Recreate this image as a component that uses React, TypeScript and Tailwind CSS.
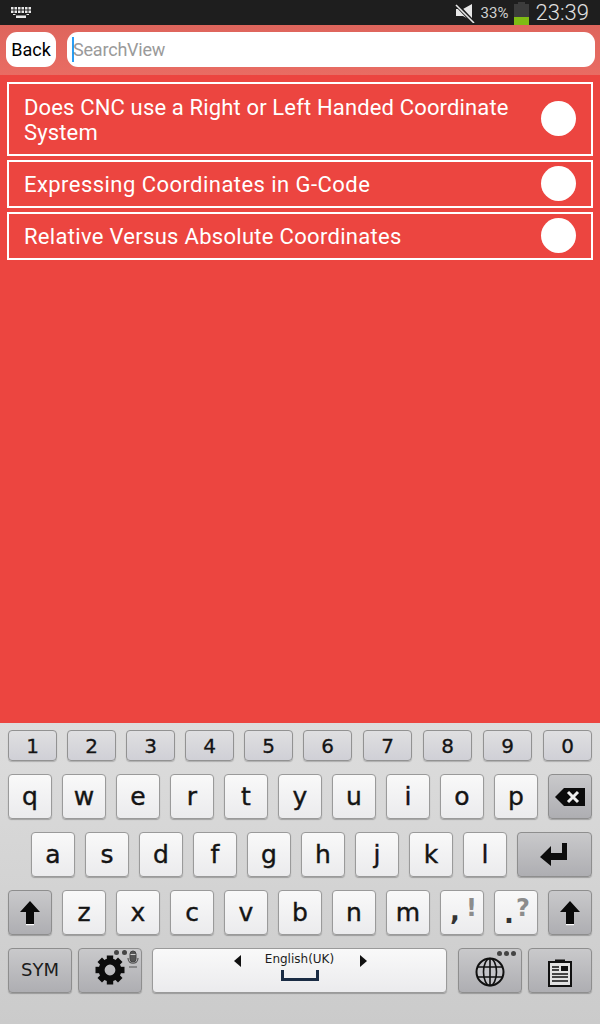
import React from "react";

const KF = "font-['DejaVu_Sans',sans-serif]";
const light = "bg-linear-to-b from-[#f9f9f9] to-[#ebebed] border border-[#9a9a9a] rounded-[4px] shadow-[0_1px_1px_rgba(0,0,0,0.25)]";
const dark = "bg-linear-to-b from-[#c9c9cb] to-[#aeaeb2] border border-[#8e8e8e] rounded-[4px] shadow-[0_1px_1px_rgba(0,0,0,0.25)]";
const num = "bg-linear-to-b from-[#dfdfe1] to-[#d0d0d6] border border-[#929292] rounded-[4px] shadow-[0_1px_1px_rgba(0,0,0,0.2)]";

function Key({ c }: { c: string }) {
  return (
    <div className={`w-[44px] h-[45px] flex items-center justify-center text-[25px] leading-none text-[#141414] [-webkit-text-stroke:0.4px_#141414] ${KF} ${light}`}>
      {c}
    </div>
  );
}
function Num({ c }: { c: string }) {
  return (
    <div className={`w-[49px] h-[31px] flex items-center justify-center text-[20px] leading-none text-[#141414] [-webkit-text-stroke:0.3px_#141414] ${KF} ${num}`}>
      {c}
    </div>
  );
}
function Shift() {
  return (
    <div className={`w-[44px] h-[45px] flex items-center justify-center ${dark}`}>
      <svg width="22" height="26" viewBox="0 0 22 26">
        <path d="M11 1 L21 12 L15 12 L15 24 L7 24 L7 12 L1 12 Z" fill="#0a0a0a" />
        <rect x="7" y="24" width="8" height="1.2" fill="#fff" />
      </svg>
    </div>
  );
}
function Row({ q, text, t }: { q: string; text: React.ReactNode; t: string }) {
  return (
    <div className={`border-2 border-white flex items-center pl-[15px] pr-[15px] ${q}`}>
      <div className={`flex-1 text-white text-[22px] leading-[25px] mt-[1px] ${t}`}>{text}</div>
      <div className="w-[35px] h-[35px] rounded-full bg-white shrink-0 mb-[1px]" />
    </div>
  );
}

function Gear() {
  const teeth = [0, 45, 90, 135, 180, 225, 270, 315];
  return (
    <svg width="32" height="32" viewBox="0 0 32 32">
      {teeth.map((a) => (
        <rect key={a} x="12.8" y="1.5" width="6.4" height="8" fill="#0c0c0c" transform={`rotate(${a} 16 16)`} />
      ))}
      <circle cx="16" cy="16" r="8.4" fill="none" stroke="#0c0c0c" strokeWidth="6" />
    </svg>
  );
}

export default function App() {
  return (
    <div className="w-[600px] h-[1024px] flex flex-col overflow-hidden font-['Roboto',sans-serif] bg-[#ec4540]">
      {/* status bar */}
      <div className="h-[25px] bg-[#1e1e1e] flex items-center pl-[11px] pr-[11px] shrink-0">
        <svg width="20" height="11" viewBox="0 0 20 11" fill="#e8e8e8">
          {[0, 3.5, 7, 10.5, 14, 17.5].map((x) => <rect key={x} x={x} y="0" width="2.5" height="2.5" />)}
          {[0, 3.5, 7, 10.5, 14, 17.5].map((x) => <rect key={x} x={x} y="3.5" width="2.5" height="2.5" />)}
          <rect x="2" y="7" width="2.5" height="1" />
          <rect x="15.5" y="7" width="2.5" height="1" />
          <rect x="5" y="8.5" width="10" height="2.5" />
        </svg>
        <div className="ml-auto flex items-center">
          <svg width="20" height="20" viewBox="0 0 20 20" className="mr-[6px]">
            <path d="M1 6 L8 6 L17 1 L17 18 L8 13 L1 13 Z" fill="#e8e8e8" />
            <path d="M0 0 L19 20" stroke="#1e1e1e" strokeWidth="4" />
            <path d="M1 2 L19 20" stroke="#e8e8e8" strokeWidth="1.6" />
          </svg>
          <span className="text-[15px] leading-none text-[#cfcfcf] w-[33px] mt-[1px]">33%</span>
          <div className="w-[15px] h-[23px] flex flex-col items-center mt-[1px]">
            <div className="w-[7px] h-[2px] bg-[#3c3c3c]" />
            <div className="w-[15px] h-[13px] bg-[#3c3c3c]" />
            <div className="w-[15px] h-[8px] bg-[#7fbb14]" />
          </div>
          <span className="ml-[7px] text-[22px] leading-none font-light text-[#e2e2e2]">23:39</span>
        </div>
      </div>

      {/* toolbar */}
      <div className="h-[50px] shrink-0 bg-linear-to-b from-[#de655c] to-[#e96c63] flex items-start pl-[6px] pr-[5px] gap-[11px] pt-[7px]">
        <div className="w-[50px] h-[35px] rounded-[11px] bg-white text-black text-[18px] flex items-center justify-center">Back</div>
        <div className="flex-1 h-[35px] rounded-[11px] bg-white flex items-center pl-[5px]">
          <div className="w-[2px] h-[25px] bg-[#2a9df4]" />
          <span className="text-[18px] text-[#9a9a9a] tracking-[-0.2px] -ml-[1px]">SearchView</span>
        </div>
      </div>

      {/* list */}
      <div className="flex-1 pt-[7px] px-[7px] flex flex-col gap-[4px]">
        <Row q="h-[74px]" t="tracking-[0.15px]" text={<>Does CNC use a Right or Left Handed Coordinate<br />System</>} />
        <Row q="h-[48px]" t="tracking-[0.45px]" text="Expressing Coordinates in G-Code" />
        <Row q="h-[48px]" t="tracking-[0.3px]" text="Relative Versus Absolute Coordinates" />
      </div>

      {/* keyboard */}
      <div className="h-[301px] shrink-0 bg-linear-to-b from-[#dddddd] to-[#cbcbcb] pt-[7px] px-[8px] flex flex-col">
        <div className="flex">
          <div className="flex gap-[10px]">
            {["1", "2", "3", "4", "5", "6"].map((c) => <Num key={c} c={c} />)}
          </div>
          <div className="flex gap-[11px] ml-[11px]">
            {["7", "8", "9", "0"].map((c) => <Num key={c} c={c} />)}
          </div>
        </div>

        <div className="flex gap-[10px] mt-[13px]">
          {"qwertyuiop".split("").map((c) => <Key key={c} c={c} />)}
          <div className={`w-[44px] h-[45px] flex items-center justify-center ${dark}`}>
            <svg width="30" height="18" viewBox="0 0 30 18">
              <path d="M0 9 L9 0 L30 0 L30 18 L9 18 Z" fill="#0c0c0c" />
              <path d="M13 4 L23 14 M23 4 L13 14" stroke="#f0f0f0" strokeWidth="3" />
            </svg>
          </div>
        </div>

        <div className="flex gap-[10px] mt-[13px] pl-[23px]">
          {"asdfghjkl".split("").map((c) => <Key key={c} c={c} />)}
          <div className={`w-[75px] h-[45px] flex items-center justify-center ${dark}`}>
            <svg className="-ml-[2px]" width="28" height="23" viewBox="0 0 28 23">
              <path d="M0 14 L11 3 L11 10 L22 10 L22 0 L27 0 L27 17 L11 17 L11 23 Z" fill="#0c0c0c" />
            </svg>
          </div>
        </div>

        <div className="flex gap-[10px] mt-[13px]">
          <Shift />
          {"zxcvbnm".split("").map((c) => <Key key={c} c={c} />)}
          <div className={`relative w-[44px] h-[45px] ${light} ${KF} font-bold`}>
            <span className="absolute left-[9px] top-[7px] text-[26px] leading-none text-[#333]">,</span>
            <span className="absolute left-[25px] top-[5px] text-[24px] leading-none text-[#8c8c8c]">!</span>
          </div>
          <div className={`relative w-[44px] h-[45px] ${light} ${KF} font-bold`}>
            <span className="absolute left-[9px] top-[10px] text-[26px] leading-none text-[#333]">.</span>
            <span className="absolute left-[21px] top-[5px] text-[24px] leading-none text-[#8c8c8c]">?</span>
          </div>
          <Shift />
        </div>

        <div className="flex mt-[13px]">
          <div className={`w-[64px] h-[45px] flex items-center justify-center text-[18px] pb-[2px] text-[#1c1c1c] ${KF} ${dark}`}>SYM</div>
          <div className={`relative w-[64px] h-[45px] ml-[6px] ${dark}`}>
            <div className="absolute left-[15px] top-[5px]"><Gear /></div>
            <div className="absolute left-[35px] top-[1px] w-[5px] h-[5px] rounded-full bg-[#444]" />
            <div className="absolute left-[43px] top-[1px] w-[5px] h-[5px] rounded-full bg-[#444]" />
            <svg className="absolute left-[48px] top-[1px]" width="12" height="18" viewBox="0 0 12 18">
              <rect x="3" y="1" width="6" height="11" rx="3" fill="#555" stroke="#444" />
              <path d="M3.5 4.5 H8.5" stroke="#ccc" strokeWidth="1" />
              <path d="M1 8 C1 15 11 15 11 8 M2 17 L10 17" fill="none" stroke="#555" strokeWidth="1.2" />
            </svg>
          </div>
          <div className={`relative w-[295px] h-[45px] ml-[10px] flex flex-col items-center ${light}`}>
            <span className={`text-[12px] leading-none mt-[4px] text-[#1c1c1c] ${KF}`}>English(UK)</span>
            <svg className="mt-[5px]" width="38" height="11" viewBox="0 0 38 11">
              <path d="M1.5 0 V9.5 H36.5 V0" fill="none" stroke="#1a2c44" strokeWidth="3" />
            </svg>
            <svg className="absolute left-[81px] top-[6px]" width="7" height="12" viewBox="0 0 7 12"><path d="M7 0 V12 L0 6 Z" fill="#111" /></svg>
            <svg className="absolute left-[207px] top-[6px]" width="7" height="12" viewBox="0 0 7 12"><path d="M0 0 V12 L7 6 Z" fill="#111" /></svg>
          </div>
          <div className={`relative w-[64px] h-[45px] ml-[11px] flex items-center justify-center ${dark}`}>
            <svg className="mt-[3px] mr-[1px]" width="30" height="30" viewBox="0 0 30 30" fill="none" stroke="#111">
              <circle cx="15" cy="15" r="13.5" strokeWidth="2" fill="#c4c4c8" />
              <ellipse cx="15" cy="15" rx="6.5" ry="13.5" strokeWidth="1.6" />
              <path d="M15 1.5 V28.5 M2 10 H28 M2 20 H28" strokeWidth="1.6" />
            </svg>
            <div className="absolute left-[38px] top-[2px] flex gap-[2px]">
              <div className="w-[5px] h-[5px] rounded-full bg-[#444]" />
              <div className="w-[5px] h-[5px] rounded-full bg-[#444]" />
              <div className="w-[5px] h-[5px] rounded-full bg-[#444]" />
            </div>
          </div>
          <div className={`w-[64px] h-[45px] ml-[6px] flex items-center justify-center ${dark}`}>
            <svg className="mt-[4px]" width="24" height="28" viewBox="0 0 24 28">
              <rect x="1" y="3" width="22" height="24" fill="#e2e2e2" stroke="#111" strokeWidth="2" />
              <rect x="7" y="0.5" width="10" height="3" fill="#111" />
              <rect x="13" y="7" width="7" height="5" fill="#111" />
              <path d="M4 8 H11 M4 11 H11 M4 15 H20 M4 18 H20 M4 22 H20" stroke="#111" strokeWidth="1.5" />
            </svg>
          </div>
        </div>
      </div>
    </div>
  );
}
